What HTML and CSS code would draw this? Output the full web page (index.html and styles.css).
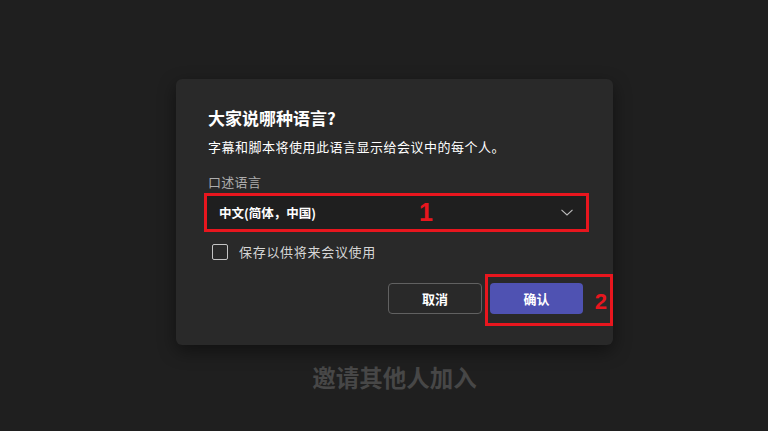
FILE: index.html
```html
<!DOCTYPE html>
<html lang="zh-CN">
<head>
<meta charset="utf-8">
<title>语言</title>
<link rel="stylesheet" href="styles.css">
</head>
<body>
<div class="stage">
  <div class="dialog">
    <h1 class="title">大家说哪种语言?</h1>
    <p class="subtitle">字幕和脚本将使用此语言显示给会议中的每个人。</p>
    <div class="label">口述语言</div>
    <div class="select">
      <span class="select-value">中文(简体，中国)</span>
      <span class="mark mark-1">1</span>
      <svg class="chevron" width="12" height="7" viewBox="0 0 12 7"><path d="M0.5 0.8 L6 6 L11.5 0.8" fill="none" stroke="#bdbdbd" stroke-width="1.1"/></svg>
    </div>
    <label class="check-row">
      <span class="checkbox"></span>
      <span class="check-text">保存以供将来会议使用</span>
    </label>
    <div class="actions">
      <button class="btn btn-cancel">取消</button>
      <button class="btn btn-ok">确认</button>
    </div>
    <div class="annot-box"><span class="mark mark-2">2</span></div>
  </div>
  <div class="invite">邀请其他人加入</div>
</div>
</body>
</html>
```

FILE: styles.css
```css
html, body {
  margin: 0;
  padding: 0;
  background: #1f1f1f;
  height: 100%;
  overflow: hidden;
}
body {
  font-family: "Noto Sans CJK SC", "Noto Sans", sans-serif;
  color: #ffffff;
}
.stage {
  padding: 79px 0 0 176px;
  width: 437px;
}
.dialog {
  position: relative;
  width: 437px;
  box-sizing: border-box;
  background: #292929;
  border-radius: 6px;
  padding: 27px 30px 31px 32px;
  box-shadow: 0 6px 18px rgba(0, 0, 0, 0.45);
}
.title {
  margin: 0;
  font-size: 17px;
  line-height: 24px;
  font-weight: 700;
  color: #ffffff;
}
.subtitle {
  margin: 8px 0 0;
  font-size: 13px;
  line-height: 18px;
  letter-spacing: 0.5px;
  color: #ffffff;
}
.label {
  margin-top: 17px;
  font-size: 13px;
  line-height: 18px;
  letter-spacing: 0.3px;
  color: #adadad;
}
.select {
  margin: 2px 0 0 -4px;
  width: 385px;
  height: 39px;
  box-sizing: border-box;
  border: 3px solid #e8161e;
  background: #1f1f1f;
  display: flex;
  align-items: center;
  padding: 0 13px 0 12px;
  position: relative;
}
.select-value {
  font-size: 12.5px;
  font-weight: 700;
  color: #ffffff;
}
.chevron {
  margin-left: auto;
}
.mark {
  font-family: "Liberation Sans", "DejaVu Sans", sans-serif;
  font-weight: 700;
  color: #e8161e;
}
.mark-1 {
  position: absolute;
  left: 212px;
  top: 3px;
  font-size: 25px;
  line-height: 26px;
}
.check-row {
  display: flex;
  align-items: center;
  margin: 12px 0 0 4px;
  height: 16px;
}
.checkbox {
  width: 16px;
  height: 16px;
  box-sizing: border-box;
  border: 1px solid #c4c4c4;
  border-radius: 2px;
}
.check-text {
  margin-left: 11px;
  font-size: 13px;
  line-height: 18px;
  letter-spacing: 0.7px;
  color: #d6d6d6;
}
.actions {
  display: flex;
  justify-content: flex-end;
  gap: 8px;
  margin-top: 23px;
}
.btn {
  width: 93px;
  height: 31px;
  box-sizing: border-box;
  border-radius: 4px;
  font-family: "Noto Sans CJK SC", sans-serif;
  font-size: 13px;
  font-weight: 700;
  color: #ffffff;
  cursor: pointer;
}
.btn-cancel {
  width: 94px;
  background: #292929;
  border: 1px solid #616161;
}
.btn-ok {
  background: #4f52b2;
  border: none;
}
.annot-box {
  position: absolute;
  left: 309px;
  top: 195px;
  width: 128px;
  height: 52px;
  box-sizing: border-box;
  border: 3px solid #e8161e;
}
.mark-2 {
  position: absolute;
  right: 3px;
  top: 13px;
  font-size: 22px;
  line-height: 24px;
}
.invite {
  margin-top: 18px;
  text-align: center;
  font-size: 23.5px;
  font-weight: 700;
  line-height: 28px;
  color: #474747;
}
```
